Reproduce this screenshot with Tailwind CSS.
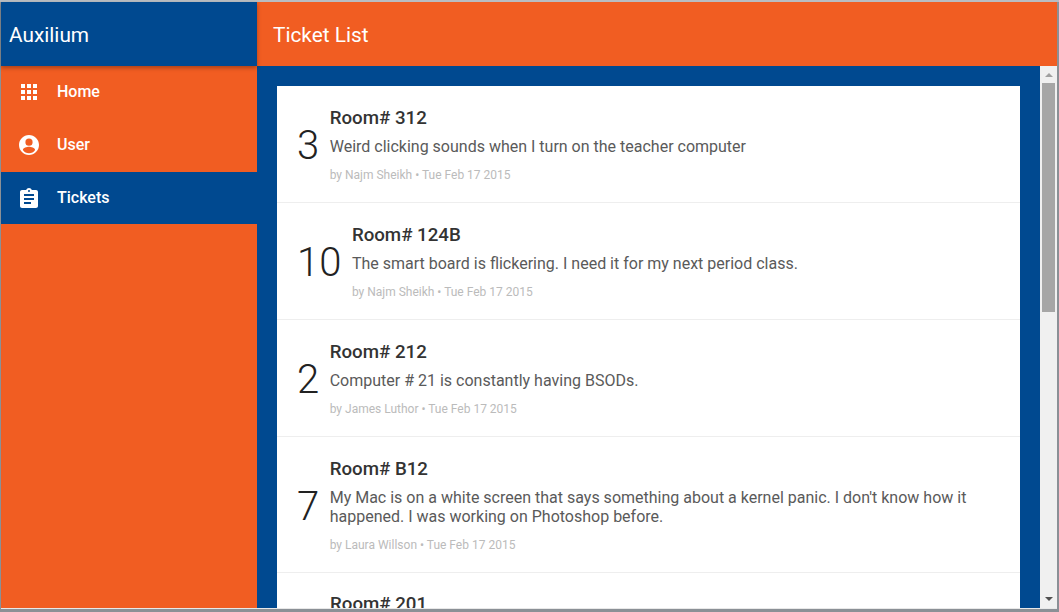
<!DOCTYPE html>
<html lang="en">
<head>
    <meta charset="UTF-8">
    <title>Auxilium</title>
    <script src="https://cdn.jsdelivr.net/npm/@tailwindcss/browser@4"></script>
</head>
<body class="overflow-hidden font-['Roboto',sans-serif]">
<div class="h-[612px] w-[1059px] flex flex-col bg-[#8b9096] border-t-2 border-t-[#b9bdc2] pl-px pr-0.5 pb-[3px]">
    <div class="flex flex-1 min-h-0 border-b border-b-[#e8e8e8]">

        <!-- Sidebar -->
        <aside class="w-64 shrink-0 flex flex-col bg-[#f15d22]">
            <div class="h-16 shrink-0 flex items-center pl-2 pt-1 bg-[#004990] text-white text-[20.8px] shadow-[0_2px_4px_rgba(0,0,0,0.3)] relative">Auxilium</div>
            <nav class="flex flex-col text-white text-base font-medium">
                <a class="h-[53px] flex items-center pl-[18px] pb-0.5 gap-[18px]">
                    <svg class="w-5 h-5" viewBox="0 0 20 20" fill="#fff"><path d="M2 2h4v4H2zM8 2h4v4H8zM14 2h4v4h-4zM2 8h4v4H2zM8 8h4v4H8zM14 8h4v4h-4zM2 14h4v4H2zM8 14h4v4H8zM14 14h4v4h-4z"/></svg>
                    <span>Home</span>
                </a>
                <a class="h-[53px] flex items-center pl-[18px] pb-0.5 gap-[18px]">
                    <svg class="w-5 h-5" viewBox="2 2 20 20" fill="#fff"><path d="M12 2C6.48 2 2 6.48 2 12s4.48 10 10 10 10-4.48 10-10S17.52 2 12 2zm0 3.6a3.6 3.6 0 1 1 0 7.2 3.6 3.6 0 0 1 0-7.2zm0 14.6a7.4 7.4 0 0 1-6.1-3.3c.03-2 4.07-3.1 6.1-3.1s6.07 1.1 6.1 3.1a7.4 7.4 0 0 1-6.1 3.3z"/></svg>
                    <span>User</span>
                </a>
                <a class="h-[52px] flex items-center pl-[19px] gap-[19px] bg-[#004990]">
                    <svg class="w-[18px] h-5" viewBox="3 1 18 20" fill="#fff"><path d="M19 3h-4.18C14.4 1.84 13.3 1 12 1s-2.4.84-2.82 2H5c-1.1 0-2 .9-2 2v14c0 1.1.9 2 2 2h14c1.1 0 2-.9 2-2V5c0-1.1-.9-2-2-2zm-7 0a1 1 0 1 1 0 2 1 1 0 0 1 0-2zm2 14H7v-2h7v2zm3-4H7v-2h10v2zm0-4H7V7h10v2z"/></svg>
                    <span>Tickets</span>
                </a>
            </nav>
        </aside>

        <!-- Main -->
        <main class="flex-1 min-w-0 flex flex-col">
            <header class="h-16 shrink-0 flex items-center pl-4 pt-1 bg-[#f15d22] text-white text-[20.8px]">Ticket List</header>
            <div class="flex flex-1 min-h-0">
                <div class="flex-1 min-w-0 overflow-hidden bg-[#004990] px-5 pt-5">
                    <ul class="bg-white">
                        <li class="flex items-center h-[117px] pl-5 pr-5 border-b border-b-[#eeeeee]">
                            <div class="text-[40px] font-light text-[#222] mr-[10.5px] mt-1">3</div>
                            <div>
                                <h3 class="text-[18.72px] leading-6 font-medium text-[#333]">Room# 312</h3>
                                <p class="text-base leading-[19.2px] mt-[7px] text-[#5a5a5a]">Weird clicking sounds when I turn on the teacher computer</p>
                                <p class="text-xs leading-4 mt-[10.8px] text-[#bbb]">by Najm Sheikh • Tue Feb 17 2015</p>
                            </div>
                        </li>
                        <li class="flex items-center h-[117px] pl-5 pr-5 border-b border-b-[#eeeeee]">
                            <div class="text-[40px] font-light text-[#222] mr-[10.5px] mt-1">10</div>
                            <div>
                                <h3 class="text-[18.72px] leading-6 font-medium text-[#333]">Room# 124B</h3>
                                <p class="text-base leading-[19.2px] mt-[7px] text-[#5a5a5a]">The smart board is flickering. I need it for my next period class.</p>
                                <p class="text-xs leading-4 mt-[10.8px] text-[#bbb]">by Najm Sheikh • Tue Feb 17 2015</p>
                            </div>
                        </li>
                        <li class="flex items-center h-[117px] pl-5 pr-5 border-b border-b-[#eeeeee]">
                            <div class="text-[40px] font-light text-[#222] mr-[10.5px] mt-1">2</div>
                            <div>
                                <h3 class="text-[18.72px] leading-6 font-medium text-[#333]">Room# 212</h3>
                                <p class="text-base leading-[19.2px] mt-[7px] text-[#5a5a5a]">Computer # 21 is constantly having BSODs.</p>
                                <p class="text-xs leading-4 mt-[10.8px] text-[#bbb]">by James Luthor • Tue Feb 17 2015</p>
                            </div>
                        </li>
                        <li class="flex items-center h-[136px] pl-5 pr-5 border-b border-b-[#eeeeee]">
                            <div class="text-[40px] font-light text-[#222] mr-[10.5px] mt-1">7</div>
                            <div class="pt-px">
                                <h3 class="text-[18.72px] leading-6 font-medium text-[#333]">Room# B12</h3>
                                <p class="text-base leading-[19px] mt-[7px] text-[#5a5a5a]">My Mac is on a white screen that says something about a kernel panic. I don't know how it happened. I was working on Photoshop before.</p>
                                <p class="text-xs leading-4 mt-[10.2px] text-[#bbb]">by Laura Willson • Tue Feb 17 2015</p>
                            </div>
                        </li>
                        <li class="h-[117px] pl-[53px] pr-5 pt-[19px]">
                            <h3 class="text-[18.72px] leading-6 font-medium text-[#333]">Room# 201</h3>
                        </li>
                    </ul>
                </div>

                <!-- Scrollbar -->
                <div class="w-[17px] shrink-0 flex flex-col items-center bg-[#f0f0f0] relative">
                    <div class="w-0 h-0 mt-[7px] border-x-[4px] border-x-transparent border-b-[4px] border-b-[#a0a0a0]"></div>
                    <div class="absolute top-[17px] left-0.5 w-[13px] h-[229px] bg-[#a6a6a6]"></div>
                    <div class="w-0 h-0 mt-auto mb-[7px] border-x-[4px] border-x-transparent border-t-[4px] border-t-[#505050]"></div>
                </div>
            </div>
        </main>
    </div>
</div>
</body>
</html>
